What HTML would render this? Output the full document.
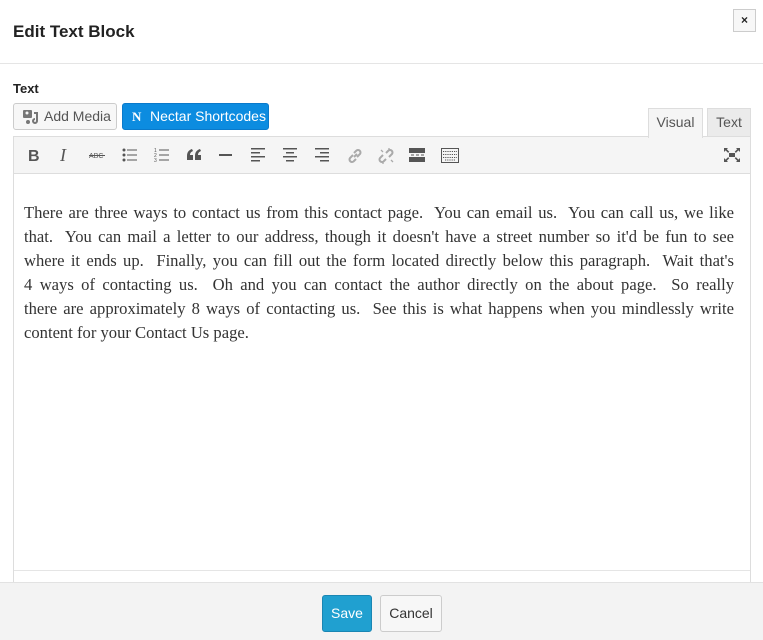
<!DOCTYPE html>
<html><head><meta charset="utf-8"><style>
*{margin:0;padding:0;box-sizing:border-box}
body{width:763px;height:640px;background:#fff;font-family:"Liberation Sans",sans-serif;position:relative;overflow:hidden;color:#222}
.title{position:absolute;left:13px;top:22px;font-size:17px;font-weight:bold;color:#222}
.close{position:absolute;left:733px;top:9px;width:23px;height:23px;border:1px solid #ccc;background:#f7f7f7;font-size:12px;font-weight:bold;text-align:center;line-height:21px}
.hr{position:absolute;left:0;top:63px;width:763px;height:1px;background:#e5e5e5}
.lbl{position:absolute;left:13px;top:81px;font-size:13px;font-weight:bold}
.btn{position:absolute;top:103px;height:27px;border-radius:3px;font-size:14px;line-height:25px}
.am{left:13px;width:104px;border:1px solid #ccc;background:#f7f7f7;color:#555;padding-left:30px}
.ns{left:122px;width:147px;background:#0c8ce0;border:1px solid #0a7acb;color:#fff;padding-left:27px}
.tab{position:absolute;top:108px;height:29px;font-size:14px;line-height:27px;text-align:center;color:#555;border:1px solid #ddd;border-bottom:none}
.editor{position:absolute;left:13px;top:136px;width:738px;height:446px;border:1px solid #ddd;border-bottom:none}
.tb{height:37px;background:#f5f5f5;border-bottom:1px solid #ddd;position:relative}
.tb svg{position:absolute;top:10px}
.content{position:absolute;left:10px;top:64px;width:710px;font-family:"Liberation Serif",serif;font-size:16.6px;color:#333}
.content div{height:24px;line-height:24px;text-align:justify;text-align-last:justify;white-space:nowrap}
.content div.l{text-align-last:left}
.status{position:absolute;left:0;top:433px;width:736px;height:1px;background:#e5e5e5}
.foot{position:absolute;left:0;top:582px;width:763px;height:58px;background:#f3f3f3;border-top:1px solid #e2e2e2}
.save{position:absolute;left:322px;top:12px;width:50px;height:37px;background:#20a0d0;border:1px solid #1a86b3;border-radius:3px;color:#fff;font-size:14px;text-align:center;line-height:35px}
.cancel{position:absolute;left:380px;top:12px;width:62px;height:37px;background:#f7f7f7;border:1px solid #ccc;border-radius:3px;color:#333;font-size:14px;text-align:center;line-height:35px}
</style></head><body>
<div class="title">Edit Text Block</div>
<div class="close">×</div>
<div class="hr"></div>
<div class="lbl">Text</div>
<div class="btn am"><svg style="position:absolute;left:8px;top:5px" width="17" height="16" viewBox="0 0 17 16"><rect x="1" y="1" width="9" height="8" rx="1" fill="#777"/><circle cx="5" cy="4" r="1.5" fill="#f7f7f7"/><path d="M12 4h3v8a2 2 0 1 1-2-2" stroke="#777" stroke-width="2" fill="none"/><circle cx="6" cy="13" r="2" fill="#777"/></svg>Add Media</div>
<div class="btn ns"><span style="position:absolute;left:9px;top:0;font-family:'Liberation Serif',serif;font-weight:bold;font-size:13px">N</span>Nectar Shortcodes</div>
<div class="tab" style="left:648px;width:55px;background:#f5f5f5;z-index:2;height:30px">Visual</div>
<div class="tab" style="left:707px;width:44px;background:#ebebeb">Text</div>
<div class="editor">
<div class="tb">
<svg style="left:14px" width="12" height="16"><text x="0" y="14" font-family="Liberation Sans" font-weight="bold" font-size="16" fill="#555">B</text></svg>
<svg style="left:46px" width="12" height="16"><text x="0" y="14" font-family="Liberation Serif" font-style="italic" font-size="18" fill="#555">I</text></svg>
<svg style="left:75px" width="18" height="16"><text x="0" y="11" font-family="Liberation Sans" font-size="7" fill="#555">ABC</text><line x1="0" y1="8.5" x2="16" y2="8.5" stroke="#555"/></svg>
<g></g>
<svg style="left:108px" width="16" height="16" fill="#555"><circle cx="2" cy="3" r="1.5"/><circle cx="2" cy="8" r="1.5"/><circle cx="2" cy="13" r="1.5"/><rect x="5" y="2.5" width="10" height="1"/><rect x="5" y="7.5" width="10" height="1"/><rect x="5" y="12.5" width="10" height="1"/></svg>
<svg style="left:140px" width="16" height="16" fill="#555"><text x="0" y="5" font-size="5" font-family="Liberation Sans">1</text><text x="0" y="10" font-size="5" font-family="Liberation Sans">2</text><text x="0" y="15" font-size="5" font-family="Liberation Sans">3</text><rect x="5" y="2.5" width="10" height="1"/><rect x="5" y="7.5" width="10" height="1"/><rect x="5" y="12.5" width="10" height="1"/></svg>
<svg style="left:172px" width="16" height="16" fill="#555"><path d="M1 13V9c0-4 2-6 5-7l1 2c-2 1-3 2-3 4h3v5z"/><path d="M9 13V9c0-4 2-6 5-7l1 2c-2 1-3 2-3 4h3v5z"/></svg>
<svg style="left:204px" width="16" height="16"><rect x="1" y="7" width="13" height="2" fill="#555"/></svg>
<svg style="left:236px" width="16" height="16" fill="#555"><rect x="1" y="1" width="14" height="1.5"/><rect x="1" y="5" width="9" height="1.5"/><rect x="1" y="9" width="14" height="1.5"/><rect x="1" y="13" width="9" height="1.5"/></svg>
<svg style="left:268px" width="16" height="16" fill="#555"><rect x="1" y="1" width="14" height="1.5"/><rect x="4" y="5" width="8" height="1.5"/><rect x="1" y="9" width="14" height="1.5"/><rect x="4" y="13" width="8" height="1.5"/></svg>
<svg style="left:300px" width="16" height="16" fill="#555"><rect x="1" y="1" width="14" height="1.5"/><rect x="6" y="5" width="9" height="1.5"/><rect x="1" y="9" width="14" height="1.5"/><rect x="6" y="13" width="9" height="1.5"/></svg>
<svg style="left:332px" width="18" height="18" fill="none" stroke="#aaa" stroke-width="2"><path d="M8 10l3-3"/><path d="M7 8L4 11a2.5 2.5 0 0 0 3.5 3.5L10 12"/><path d="M11 10l3-3a2.5 2.5 0 0 0-3.5-3.5L8 6"/></svg>
<svg style="left:363px" width="18" height="18" fill="none" stroke="#aaa" stroke-width="2"><path d="M6 8L3 11a2.5 2.5 0 0 0 3.5 3.5L9 12"/><path d="M12 10l3-3a2.5 2.5 0 0 0-3.5-3.5L9 6"/><path d="M4 3l2 2M14 13l2 2M12 1v3M6 14v3" stroke-width="1.3"/></svg>
<svg style="left:395px" width="17" height="16" fill="#555"><rect x="0" y="1" width="16" height="5"/><rect x="0" y="10" width="16" height="5"/><rect x="2" y="7.5" width="3" height="1"/><rect x="7" y="7.5" width="3" height="1"/><rect x="12" y="7.5" width="3" height="1"/></svg>
<svg style="left:426px" width="20" height="17" fill="none" stroke="#555"><rect x="1.5" y="1.5" width="17" height="14"/><path d="M3 4.5h14M3 7.5h14M3 10.5h14M5 13h10" stroke-dasharray="1.2 1"/></svg>
<svg style="left:709px" width="18" height="16" fill="#555"><rect x="6" y="6" width="6" height="4"/><path d="M1 1h4l-1.2 1.2 2.5 2.5-1.2 1.2-2.5-2.5L1 5z"/><path d="M17 1h-4l1.2 1.2-2.5 2.5 1.2 1.2 2.5-2.5L17 5z"/><path d="M1 15h4l-1.2-1.2 2.5-2.5-1.2-1.2-2.5 2.5L1 11z"/><path d="M17 15h-4l1.2-1.2-2.5-2.5 1.2-1.2 2.5 2.5L17 11z"/></svg>
</div>
<div class="content">
<div>There are three ways to contact us from this contact page.&nbsp; You can email us.&nbsp; You can call us, we like</div>
<div>that.&nbsp; You can mail a letter to our address, though it doesn't have a street number so it'd be fun to see</div>
<div>where it ends up.&nbsp; Finally, you can fill out the form located directly below this paragraph.&nbsp; Wait that's</div>
<div>4 ways of contacting us.&nbsp; Oh and you can contact the author directly on the about page.&nbsp; So really</div>
<div>there are approximately 8 ways of contacting us.&nbsp; See this is what happens when you mindlessly write</div>
<div class="l">content for your Contact Us page.</div>
</div>
<div class="status"></div>
</div>
<div class="foot"><div class="save">Save</div><div class="cancel">Cancel</div></div>
</body></html>
